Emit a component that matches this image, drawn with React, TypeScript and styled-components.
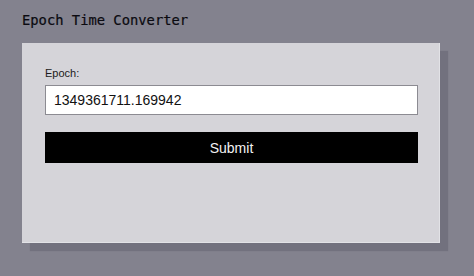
import styled, { createGlobalStyle } from "styled-components";

const GlobalStyle = createGlobalStyle`
  html, body {
    margin: 0;
    padding: 0;
    background: #83828e;
  }
`;

const Page = styled.div`
  width: 474px;
  height: 276px;
  box-sizing: border-box;
  padding: 12px 22px 0;
  background: #83828e;
  display: flex;
  flex-direction: column;
  gap: 14px;
`;

const Title = styled.h1`
  margin: 0;
  font-family: "DejaVu Sans Mono", "Liberation Mono", monospace;
  font-size: 13.8px;
  line-height: 17px;
  font-weight: normal;
  color: #0b0a10;
  -webkit-text-stroke: 0.2px #0b0a10;
`;

const Card = styled.form`
  width: 418px;
  height: 200px;
  box-sizing: border-box;
  padding: 24px 21px 0 23px;
  background: #d5d4d9;
  border-right: 1px solid #e2e2e6;
  border-bottom: 1px solid #e2e2e6;
  box-shadow: 8px 8px 1px rgba(40, 38, 55, 0.18);
  display: flex;
  flex-direction: column;
  font-family: "Liberation Sans", Arial, sans-serif;
`;

const Label = styled.label`
  font-size: 11px;
  line-height: 13px;
  color: #1c1b20;
  margin-bottom: 5px;
`;

const Input = styled.input`
  height: 30px;
  box-sizing: border-box;
  border: 1px solid #8c8b92;
  background: #fff;
  padding: 0 8px;
  font-family: "Liberation Sans", Arial, sans-serif;
  font-size: 14px;
  color: #111;
  outline: none;
`;

const Button = styled.button`
  margin-top: 17px;
  height: 31px;
  border: none;
  background: #000;
  color: #f2f2f2;
  font-family: "Liberation Sans", Arial, sans-serif;
  font-size: 14px;
  cursor: pointer;
`;

export default function App() {
  return (
    <Page>
      <GlobalStyle />
      <Title>Epoch Time Converter</Title>
      <Card onSubmit={(e) => e.preventDefault()}>
        <Label htmlFor="epoch">Epoch:</Label>
        <Input id="epoch" defaultValue="1349361711.169942" />
        <Button type="submit">Submit</Button>
      </Card>
    </Page>
  );
}
